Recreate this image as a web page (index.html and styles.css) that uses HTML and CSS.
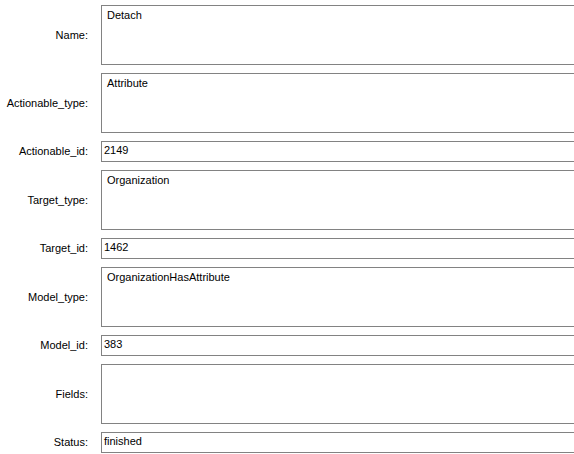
FILE: index.html
```html
<!DOCTYPE html>
<html>
<head>
<meta charset="utf-8">
<link rel="stylesheet" href="styles.css">
</head>
<body>
<div class="form">
  <div class="label">Name:</div>
  <div class="box area">Detach</div>

  <div class="label">Actionable_type:</div>
  <div class="box area">Attribute</div>

  <div class="label">Actionable_id:</div>
  <div class="box line">2149</div>

  <div class="label">Target_type:</div>
  <div class="box area">Organization</div>

  <div class="label">Target_id:</div>
  <div class="box line">1462</div>

  <div class="label">Model_type:</div>
  <div class="box area">OrganizationHasAttribute</div>

  <div class="label">Model_id:</div>
  <div class="box line">383</div>

  <div class="label">Fields:</div>
  <div class="box area"></div>

  <div class="label">Status:</div>
  <div class="box line">finished</div>
</div>
</body>
</html>
```

FILE: styles.css
```css
html, body {
  margin: 0;
  padding: 0;
  background: #ffffff;
  overflow: hidden;
}
body {
  width: 574px;
  height: 454px;
  font-family: "Liberation Sans", Arial, sans-serif;
  font-size: 11px;
  color: #000000;
}
.form {
  display: grid;
  grid-template-columns: 88px 490px;
  column-gap: 13px;
  row-gap: 8px;
  padding-top: 5px;
}
.label {
  display: flex;
  align-items: center;
  justify-content: flex-end;
  line-height: 13px;
  white-space: nowrap;
}
.box {
  box-sizing: border-box;
  border: 1px solid #828282;
  background: #ffffff;
  line-height: 13px;
  white-space: nowrap;
}
.area {
  height: 60px;
  padding: 3px 5px;
}
.line {
  height: 21px;
  padding: 2px 2px;
}
```
